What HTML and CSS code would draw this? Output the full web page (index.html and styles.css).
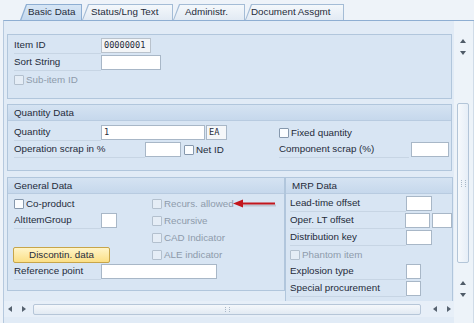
FILE: index.html
```html
<!DOCTYPE html>
<html lang="en">
<head>
    <meta charset="UTF-8">
    <meta name="viewport" content="width=device-width, initial-scale=1.0">
    <title>BOM Item - Basic Data</title>
    <link rel="stylesheet" href="styles.css">
</head>
<body>
    <div class="tabs">
        <div class="tab active tab-basic"><span>Basic Data</span></div>
        <div class="tab tab-status"><span>Status/Lng Text</span></div>
        <div class="tab tab-admin"><span>Administr.</span></div>
        <div class="tab tab-doc"><span>Document Assgmt</span></div>
    </div>
    <div class="panel">
        <div class="main">
            <div class="view">
                <div class="box box-top">
                    <div class="row">
                        <div class="lbl">Item ID</div>
                        <div class="fld fld-ro w50">00000001</div>
                    </div>
                    <div class="row">
                        <div class="lbl">Sort String</div>
                        <div class="fld w60"></div>
                    </div>
                    <div class="chk off"><i></i>Sub-item ID</div>
                </div>

                <div class="box box-qty">
                    <div class="box-head">Quantity Data</div>
                    <div class="qty">
                        <div class="row">
                            <div class="lbl">Quantity</div>
                            <div class="fld w104">1</div>
                            <div class="fld fld-unit">EA</div>
                        </div>
                        <div class="chk"><i></i>Fixed quantity</div>
                        <div class="row">
                            <div class="lbl lbl-wide">Operation scrap in %</div>
                            <div class="fld w36"></div>
                            <div class="chk chk-net"><i></i>Net ID</div>
                        </div>
                        <div class="row">
                            <div class="lbl lbl-comp">Component scrap (%)</div>
                            <div class="fld w38"></div>
                        </div>
                    </div>
                </div>

                <div class="pair">
                    <div class="box box-gen">
                        <div class="box-head">General Data</div>
                        <div class="gen">
                            <div class="chk"><i></i>Co-product</div>
                            <div class="chk off"><i></i>Recurs. allowed</div>
                            <div class="row">
                                <div class="lbl">AltItemGroup</div>
                                <div class="fld w16"></div>
                            </div>
                            <div class="chk off"><i></i>Recursive</div>
                            <div class="row"></div>
                            <div class="chk off"><i></i>CAD Indicator</div>
                            <div class="row"><button class="btn">Discontin. data</button></div>
                            <div class="chk off"><i></i>ALE indicator</div>
                            <div class="row span2">
                                <div class="lbl">Reference point</div>
                                <div class="fld w116"></div>
                            </div>
                        </div>
                        <svg class="arrow" width="44" height="12" viewBox="0 0 44 12">
                            <line x1="9" y1="7.5" x2="43" y2="7.5" stroke="#8a8f96" stroke-width="2" opacity="0.35"/>
                            <line x1="8" y1="5.5" x2="42" y2="5.5" stroke="#c3161c" stroke-width="2.2"/>
                            <polygon points="0,5.5 10,1.5 10,9.5" fill="#c3161c"/>
                        </svg>
                    </div>

                    <div class="box box-mrp">
                        <div class="box-head">MRP Data</div>
                        <div class="mrp">
                            <div class="row">
                                <div class="lbl">Lead-time offset</div>
                                <div class="fld w26"></div>
                            </div>
                            <div class="row">
                                <div class="lbl">Oper. LT offset</div>
                                <div class="fld w26"></div>
                                <div class="fld fld-next w20"></div>
                            </div>
                            <div class="row">
                                <div class="lbl">Distribution key</div>
                                <div class="fld w26"></div>
                            </div>
                            <div class="chk off"><i></i>Phantom item</div>
                            <div class="row">
                                <div class="lbl">Explosion type</div>
                                <div class="fld w15"></div>
                            </div>
                            <div class="row">
                                <div class="lbl">Special procurement</div>
                                <div class="fld w15"></div>
                            </div>
                        </div>
                    </div>
                </div>
            </div>

            <div class="hscroll">
                <span class="tri-l"></span>
                <span class="tri-r"></span>
                <div class="track"><span class="grip"></span></div>
                <span class="tri-l gap-l"></span>
                <span class="tri-r"></span>
            </div>
        </div>

        <div class="vscroll">
            <div class="vbtn"><span class="tri-u"></span></div>
            <div class="vbtn"><span class="tri-d"></span></div>
            <div class="thumb"><span class="grip grip-v"></span></div>
            <div class="vbtn vbtn-low"><span class="tri-u"></span></div>
            <div class="vbtn"><span class="tri-d"></span></div>
        </div>
    </div>
</body>
</html>
```

FILE: styles.css
```css
* {
    box-sizing: border-box;
}
body {
    margin: 0;
    width: 474px;
    height: 323px;
    overflow: hidden;
    background-color: #eef3f9;
    font-family: "Liberation Sans", Arial, sans-serif;
    font-size: 9.8px;
    color: #1f2b3a;
}

/* tab strip */
.tabs {
    display: flex;
    height: 20px;
    padding: 4px 0 0 20px;
}
.tab {
    position: relative;
    height: 16px;
    line-height: 16px;
    padding-left: 8px;
    white-space: nowrap;
    background-color: #a4bcd6;
    clip-path: polygon(6px 0, 100% 0, 100% 100%, 0 100%);
}
.tab::before {
    content: "";
    position: absolute;
    top: 1px;
    left: 1px;
    right: 1px;
    bottom: 0;
    background: linear-gradient(#f4f8fb, #e2eaf4);
    clip-path: polygon(6px 0, 100% 0, 100% 100%, 0 100%);
}
.tab span {
    position: relative;
}
.tab.active {
    background-color: #8eaed2;
}
.tab.active::before {
    bottom: -1px;
    background: linear-gradient(#d7e6f5, #c3d8ee);
}
.tab-basic { width: 62px; }
.tab-status { width: 91px; padding-left: 9px; }
.tab-admin { width: 72px; padding-left: 12px; }
.tab-doc { width: 99px; padding-left: 6px; }

/* main panel */
.panel {
    display: flex;
    height: 303px;
    margin-left: 3px;
    border-top: 1px solid #8eaed2;
    border-left: 1px solid #b6c9de;
    background-color: #e1ebf6;
}
.main {
    width: 450px;
    display: flex;
    flex-direction: column;
}
.view {
    height: 280px;
    overflow: hidden;
    padding: 13px 0 0 3px;
}

.box {
    border: 1px solid #b1c6dc;
    background-color: #d8e5f3;
}
.box-head {
    height: 16px;
    line-height: 15px;
    padding-left: 6px;
    border-bottom: 1px solid #b8cbe0;
    background: linear-gradient(#d5e3f2, #c6d8ec);
}
.box-top {
    width: 445px;
    height: 65px;
    padding: 2px 0 0 6px;
    margin-bottom: 5px;
}
.box-qty {
    width: 445px;
    height: 67px;
    margin-bottom: 6px;
}

/* rows, labels, fields */
.row {
    display: flex;
    align-items: center;
    height: 17px;
}
.lbl {
    width: 87px;
    height: 17px;
    line-height: 16px;
    white-space: nowrap;
    border-bottom: 1px solid #c7d5e4;
}
.lbl-wide { width: 131px; }
.lbl-comp { width: 130px; margin-right: 2px; }
.fld {
    height: 15px;
    border: 1px solid #a8b7c7;
    background-color: #fff;
    padding-left: 2px;
    font-family: "DejaVu Sans Mono", monospace;
    font-size: 8.6px;
    line-height: 13px;
}
.fld-ro {
    background-color: #f3f5f7;
    border-color: #b9c2cc;
}
.fld-unit {
    width: 21px;
    margin-left: 1px;
    background-color: #f5f7f9;
}
.fld-next { margin-left: 2px; }
.w15 { width: 15px; }
.w16 { width: 16px; }
.w20 { width: 20px; }
.w26 { width: 26px; }
.w36 { width: 36px; }
.w38 { width: 38px; }
.w50 { width: 50px; }
.w60 { width: 60px; }
.w104 { width: 104px; }
.w116 { width: 116px; }

.chk {
    display: flex;
    align-items: center;
    height: 17px;
    white-space: nowrap;
}
.chk i {
    width: 10px;
    height: 10px;
    margin-right: 2px;
    border: 1px solid #8698ad;
    border-radius: 1px;
    background-color: #fbfdff;
}
.chk.off {
    color: #8e9bab;
}
.chk.off i {
    border-color: #b3c0ce;
    background-color: #e5edf6;
}
.chk-net { margin-left: 3px; }

/* section grids */
.qty {
    display: grid;
    grid-template-columns: 265px 170px;
    padding: 3px 0 0 6px;
}
.pair {
    display: flex;
    align-items: flex-start;
}
.box-gen {
    position: relative;
    width: 278px;
    height: 114px;
}
.box-mrp {
    width: 168px;
    height: 125px;
}
.gen {
    display: grid;
    grid-template-columns: 138px 128px;
    padding: 1px 0 0 6px;
}
.span2 { grid-column: span 2; }
.mrp {
    padding: 1px 0 0 4px;
}
.mrp .lbl { width: 116px; }

.btn {
    width: 97px;
    height: 16px;
    margin-left: -1px;
    padding: 0;
    border: 1px solid #c7a54a;
    border-radius: 2px;
    background: linear-gradient(#fff4c8, #fbdf86);
    font-family: inherit;
    font-size: 9.8px;
    color: #1f2b3a;
}

.arrow {
    position: absolute;
    left: 225px;
    top: 20px;
}

/* horizontal scrollbar */
.hscroll {
    display: flex;
    align-items: center;
    height: 16px;
    padding-left: 4px;
    background-color: #e7eff8;
}
.tri-l, .tri-r {
    width: 0;
    height: 0;
    border-top: 3px solid transparent;
    border-bottom: 3px solid transparent;
}
.tri-l {
    border-right: 4px solid #56626f;
}
.tri-r {
    margin-left: 10px;
    border-left: 4px solid #56626f;
}
.gap-l { margin-left: 12px; }
.track {
    display: flex;
    align-items: center;
    justify-content: center;
    width: 388px;
    height: 11px;
    margin-left: 7px;
    border: 1px solid #b6c6d8;
    border-radius: 2px;
    background: linear-gradient(#f5f8fb, #e2eaf3);
}
.grip {
    width: 5px;
    height: 5px;
    border-left: 1px dotted #a9b8c8;
    border-right: 1px dotted #a9b8c8;
}

/* vertical scrollbar */
.vscroll {
    width: 20px;
    display: flex;
    flex-direction: column;
    padding: 14px 0 0 3px;
    background-color: #edf3f9;
    border-right: 1px solid #cfdbe8;
}
.vbtn {
    display: flex;
    align-items: center;
    justify-content: center;
    width: 12px;
    height: 12px;
}
.tri-u, .tri-d {
    width: 0;
    height: 0;
    border-left: 3.5px solid transparent;
    border-right: 3.5px solid transparent;
}
.tri-u { border-bottom: 4px solid #4f5b68; }
.tri-d { border-top: 4px solid #4f5b68; }
.thumb {
    display: flex;
    align-items: center;
    justify-content: center;
    width: 12px;
    height: 160px;
    margin-top: 44px;
    border: 1px solid #b3c5d8;
    border-radius: 2px;
    background: linear-gradient(90deg, #f6f9fc, #e6eef7);
}
.grip-v {
    width: 5px;
    height: 7px;
}
.vbtn-low { margin-top: 14px; }
```
